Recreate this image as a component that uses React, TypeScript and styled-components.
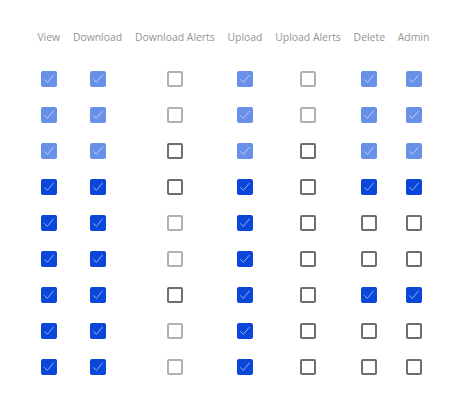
import React from "react";
import styled, { createGlobalStyle } from "styled-components";

const Global = createGlobalStyle`
  html, body { margin: 0; padding: 0; background: #fff; }
  body { font-family: "Open Sans", "DejaVu Sans", sans-serif; }
`;

const Page = styled.div`
  padding: 24px 0 0 31px;
`;

const Grid = styled.div`
  display: inline-grid;
  grid-template-columns: repeat(7, auto);
  grid-template-rows: 34px;
  grid-auto-rows: 36px;
  justify-items: center;
  align-items: center;
`;

const HeadCell = styled.div`
  align-self: start;
  padding: 0 6.4px;
  font-size: 10.4px;
  line-height: 20px;
  color: #949494;
  white-space: nowrap;
`;

type State = "c" | "cd" | "u" | "ud";

const Box = styled.span<{ $state: State }>`
  display: flex;
  align-items: center;
  justify-content: center;
  box-sizing: border-box;
  width: 16px;
  height: 16px;
  border-radius: 2px;
  background: ${(p) =>
    p.$state === "c" ? "#0a47d8" : p.$state === "cd" ? "#6790e6" : "#fff"};
  border: ${(p) =>
    p.$state === "u"
      ? "2px solid #6e6e6e"
      : p.$state === "ud"
      ? "2px solid #b0b0b0"
      : "none"};
`;

const Check = ({ state }: { state: State }) => (
  <Box $state={state}>
    {(state === "c" || state === "cd") && (
      <svg width="14" height="14" viewBox="0 0 14 14">
        <path
          d="M2.6 7.6 L5.4 10.4 L11.4 3"
          fill="none"
          stroke={state === "c" ? "#8fb0f5" : "#b9cdf6"}
          strokeWidth="1"
          strokeLinecap="round"
          strokeLinejoin="round"
        />
      </svg>
    )}
  </Box>
);

const headers = [
  "View",
  "Download",
  "Download Alerts",
  "Upload",
  "Upload Alerts",
  "Delete",
  "Admin",
];

const rows: State[][] = [
  ["cd", "cd", "ud", "cd", "ud", "cd", "cd"],
  ["cd", "cd", "ud", "cd", "ud", "cd", "cd"],
  ["cd", "cd", "u", "cd", "u", "cd", "cd"],
  ["c", "c", "u", "c", "u", "c", "c"],
  ["c", "c", "ud", "c", "u", "u", "u"],
  ["c", "c", "ud", "c", "u", "u", "u"],
  ["c", "c", "u", "c", "u", "c", "c"],
  ["c", "c", "ud", "c", "u", "u", "u"],
  ["c", "c", "ud", "c", "u", "u", "u"],
];

export default function App() {
  return (
    <Page>
      <Global />
      <Grid>
        {headers.map((h) => (
          <HeadCell key={h}>{h}</HeadCell>
        ))}
        {rows.map((r, i) =>
          r.map((s, j) => <Check key={`${i}-${j}`} state={s} />)
        )}
      </Grid>
    </Page>
  );
}
